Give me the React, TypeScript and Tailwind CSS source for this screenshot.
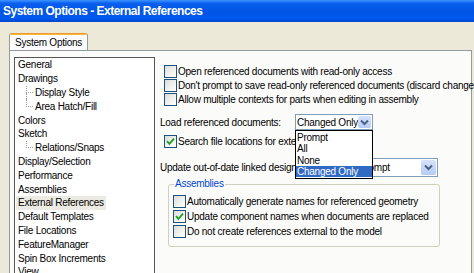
import React from 'react';

// XP style checkbox
function Check({ checked }: { checked?: boolean }) {
  return (
    <span className="w-[13px] h-[13px] shrink-0 border border-[#1c5180] bg-[linear-gradient(135deg,#dcdcd7,#f6f6f3_70%,#ffffff)] flex items-center justify-center">
      {checked && (
        <svg width="9" height="9" viewBox="0 0 9 9">
          <path d="M1 4.2 L3.4 6.8 L8 1.6" fill="none" stroke="#21a121" strokeWidth="1.8" />
        </svg>
      )}
    </span>
  );
}

function Chevron() {
  return (
    <span className="w-[15px] self-stretch my-[1px] mr-[1px] rounded-[2px] bg-[linear-gradient(to_bottom,#d6e2fd,#b7cbf7)] flex items-center justify-center">
      <svg width="9" height="7" viewBox="0 0 9 7">
        <path d="M1 1.5 L4.5 5 L8 1.5" fill="none" stroke="#4d6185" strokeWidth="2" />
      </svg>
    </span>
  );
}

type Node = { label: string; child?: boolean; last?: boolean; selected?: boolean };

const tree: Node[] = [
  { label: 'General' },
  { label: 'Drawings' },
  { label: 'Display Style', child: true },
  { label: 'Area Hatch/Fill', child: true, last: true },
  { label: 'Colors' },
  { label: 'Sketch' },
  { label: 'Relations/Snaps', child: true, last: true },
  { label: 'Display/Selection' },
  { label: 'Performance' },
  { label: 'Assemblies' },
  { label: 'External References', selected: true },
  { label: 'Default Templates' },
  { label: 'File Locations' },
  { label: 'FeatureManager' },
  { label: 'Spin Box Increments' },
  { label: 'View' },
];

const checks = [
  { label: 'Open referenced documents with read-only access' },
  { label: "Don't prompt to save read-only referenced documents (discard changes)" },
  { label: 'Allow multiple contexts for parts when editing in assembly' },
];

const groupChecks = [
  { label: 'Automatically generate names for referenced geometry' },
  { label: 'Update component names when documents are replaced', checked: true },
  { label: 'Do not create references external to the model' },
];

const options = ['Prompt', 'All', 'None', 'Changed Only'];

export default function App() {
  return (
    <div className="relative w-[474px] h-[273px] overflow-hidden bg-[#ece9d8] font-['Liberation_Sans',Arial,sans-serif] text-[10px] tracking-[-0.25px] text-black flex flex-col">
      {/* title bar */}
      <div className="h-[22px] shrink-0 bg-[linear-gradient(to_bottom,#3d95ff_0%,#0a5fef_15%,#0055e5_50%,#0058ee_85%,#0046c8_100%)] flex items-center pl-[3px] text-white font-bold text-[12px] tracking-[-0.5px]">
        System Options - External References
      </div>

      {/* tabs */}
      <div className="shrink-0 pl-[9px] pt-[11px] flex">
        <div className="relative z-10 -mb-px h-[18px] w-[79px] rounded-t-[3px] border border-[#919b9c] border-t-0 bg-[#fcfcfe] flex flex-col">
          <div className="h-[3px] rounded-t-[3px] bg-[linear-gradient(to_bottom,#e68b2c,#ffc73c)]" />
          <div className="flex-1 flex items-center pl-[5px]">System Options</div>
        </div>
      </div>

      {/* panel */}
      <div className="ml-[9px] mr-[2px] flex-1 min-h-0 border border-b-0 border-[#919b9c] bg-[#fbfbf9] flex">
        {/* tree */}
        <div className="ml-[4px] mt-[6px] w-[141px] h-[240px] shrink-0 border border-[#555] bg-white flex flex-col">
          {tree.map((n) => (
            <div key={n.label} className="h-[13.8px] shrink-0 flex items-stretch whitespace-nowrap">
              {n.child ? (
                <>
                  <span className="ml-[11px] w-[7px] flex flex-col">
                    <span className="flex-1 border-l border-b border-dotted border-[#a0a0a0]" />
                    <span className={`flex-1 border-l border-dotted ${n.last ? 'border-transparent' : 'border-[#a0a0a0]'}`} />
                  </span>
                  <span className="pl-[2px] flex items-center">{n.label}</span>
                </>
              ) : (
                <span className={`ml-[1px] px-[2px] flex items-center ${n.selected ? 'bg-[#ecebe3]' : ''}`}>{n.label}</span>
              )}
            </div>
          ))}
        </div>

        {/* options */}
        <div className="flex-1 min-w-0 pt-[13px] flex flex-col whitespace-nowrap">
          {checks.map((c) => (
            <div key={c.label} className="h-[14px] flex items-center pl-[9px] gap-[1px]">
              <Check />
              <span>{c.label}</span>
            </div>
          ))}

          <div className="mt-[7px] h-[18px] flex items-center">
            <span className="pl-[5px] w-[140px] shrink-0">Load referenced documents:</span>
            <div className="w-[78px] h-[16px] border border-[#7f9db9] bg-white flex items-center">
              <span className="flex-1 pl-[1px]">Changed Only</span>
              <Chevron />
            </div>
          </div>

          <div className="mt-[3px] h-[14px] flex items-center pl-[9px] gap-[1px]">
            <Check checked />
            <span>Search file locations for external references</span>
          </div>

          <div className="mt-[10px] h-[19px] flex items-center">
            <span className="pl-[5px] w-[202px] shrink-0 overflow-hidden">Update out-of-date linked design tables to:</span>
            <div className="w-[81px] h-[19px] border border-[#7f9db9] bg-white flex items-center">
              <span className="flex-1 pl-[1px]">Prompt</span>
              <Chevron />
            </div>
          </div>

          <fieldset className="mt-[1px] ml-[13px] w-[272px] rounded-[3px] border border-[#d0d0bf] px-[4px] pb-[7px]">
            <legend className="ml-[1px] px-[1px] leading-[12px] text-[#0046d5]">Assemblies</legend>
            <div className="mt-[4px] flex flex-col">
              {groupChecks.map((c) => (
                <div key={c.label} className="h-[15px] flex items-center">
                  <Check checked={c.checked} />
                  <span className="pl-[1px]">{c.label}</span>
                </div>
              ))}
            </div>
          </fieldset>
        </div>
      </div>

      {/* open dropdown list */}
      <div className="absolute left-[295px] top-[130px] w-[78px] border border-black bg-white pt-[1px] pb-[1px] flex flex-col">
        {options.map((o) => (
          <div
            key={o}
            className={`h-[11.3px] leading-[11.3px] pl-[1px] ${o === 'Changed Only' ? 'bg-[#316ac5] text-white' : ''}`}
          >
            {o}
          </div>
        ))}
      </div>
    </div>
  );
}
